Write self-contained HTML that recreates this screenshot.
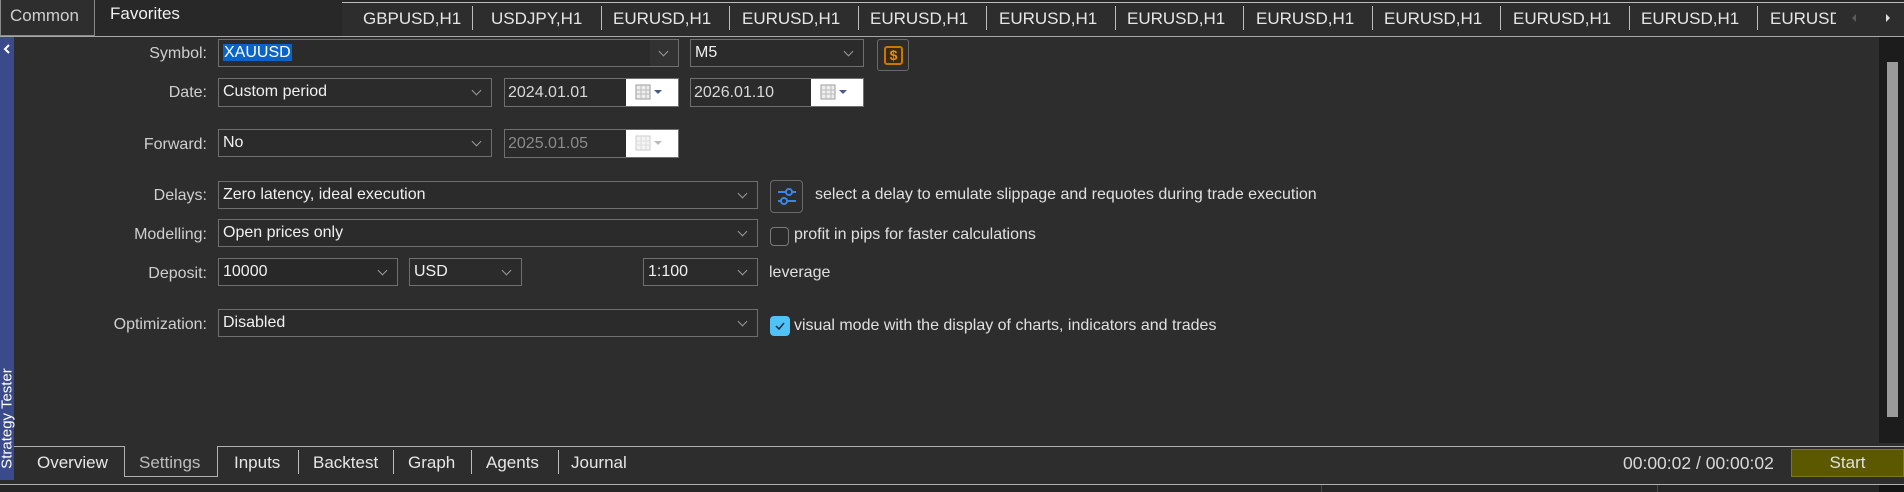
<!DOCTYPE html>
<html><head><meta charset="utf-8"><style>
*{box-sizing:border-box;margin:0;padding:0}
body{width:1904px;height:492px;background:#2d2d2d;font-family:"Liberation Sans",Arial,sans-serif;font-size:16px;color:#e2e2e2;position:relative;overflow:hidden}
.a{position:absolute}
.lbl{position:absolute;width:200px;text-align:right;color:#cfcfcf;left:7px;font-size:16px}
.sel{position:absolute;border:1px solid #6f6f6f;background:#2b2b2b;height:28px;padding:4px 4px;color:#f0f0f0;white-space:nowrap;overflow:hidden}
.sel .ar{position:absolute;right:0;top:0;bottom:0;width:28px;}
.sel .ar:after{content:"";position:absolute;left:10px;top:8px;width:6px;height:6px;border-right:1px solid #9a9a9a;border-bottom:1px solid #9a9a9a;transform:rotate(45deg)}
.date{position:absolute;border:1px solid #6f6f6f;background:#2b2b2b;height:29px;padding:5px 3px;color:#d8d8d8}
.cal{position:absolute;right:0;top:0;bottom:0;background:#fff}
.tab{position:absolute;top:8px;color:#e6e6e6;font-size:17px}
.sep{position:absolute;width:1px;background:#bdbdbd}
.bt{position:absolute;top:453px;font-size:17px;color:#e6e6e6}
.txt{position:absolute;color:#e0e0e0}
</style></head><body>
<div class="a" style="left:0;top:0;width:1904px;height:37px;background:#282828"></div>
<div class="a" style="left:0;top:0;width:95px;height:36px;border:1px solid #8a8a8a;border-top:none;background:#2e2e2e"></div>
<div class="a" style="left:10px;top:6px;color:#cfcfcf;font-size:17px">Common</div>
<div class="a" style="left:110px;top:4px;color:#f0f0f0;font-size:17px">Favorites</div>
<div class="a" style="left:342px;top:2px;width:1562px;height:1px;background:#bdbdbd"></div>
<div class="a" style="left:342px;top:3px;width:1562px;height:34px;background:#2d2d2d"></div>
<div class="a" style="left:0;top:36px;width:1904px;height:1px;background:#a8a8a8"></div>
<div class="tab" style="left:363px;top:9px">GBPUSD,H1</div>
<div class="tab" style="left:491px;top:9px">USDJPY,H1</div>
<div class="tab" style="left:613px;top:9px">EURUSD,H1</div>
<div class="tab" style="left:742px;top:9px">EURUSD,H1</div>
<div class="tab" style="left:870px;top:9px">EURUSD,H1</div>
<div class="tab" style="left:999px;top:9px">EURUSD,H1</div>
<div class="tab" style="left:1127px;top:9px">EURUSD,H1</div>
<div class="tab" style="left:1256px;top:9px">EURUSD,H1</div>
<div class="tab" style="left:1384px;top:9px">EURUSD,H1</div>
<div class="tab" style="left:1513px;top:9px">EURUSD,H1</div>
<div class="tab" style="left:1641px;top:9px">EURUSD,H1</div>
<div class="tab" style="left:1770px;top:9px;width:66px;overflow:hidden;white-space:nowrap">EURUSD,H1</div>
<div class="sep" style="left:472px;top:6px;height:24px"></div>
<div class="sep" style="left:601px;top:6px;height:24px"></div>
<div class="sep" style="left:729px;top:6px;height:24px"></div>
<div class="sep" style="left:858px;top:6px;height:24px"></div>
<div class="sep" style="left:986px;top:6px;height:24px"></div>
<div class="sep" style="left:1115px;top:6px;height:24px"></div>
<div class="sep" style="left:1243px;top:6px;height:24px"></div>
<div class="sep" style="left:1372px;top:6px;height:24px"></div>
<div class="sep" style="left:1500px;top:6px;height:24px"></div>
<div class="sep" style="left:1629px;top:6px;height:24px"></div>
<div class="sep" style="left:1757px;top:6px;height:24px"></div>
<div class="a" style="left:1836px;top:3px;width:68px;height:33px;background:#2d2d2d"></div>
<svg class="a" style="left:1848px;top:12px" width="50" height="12"><path d="M8 2 L4 6 L8 10Z" fill="#5a5a5a"/><path d="M38 2 L42 6 L38 10Z" fill="#e0e0e0"/></svg>

<div class="a" style="left:0;top:37px;width:14px;height:443px;background:#3b4a8a"></div>
<svg class="a" style="left:2px;top:43px" width="10" height="12"><path d="M7 2 L3 6 L7 10" stroke="#fff" stroke-width="2" fill="none"/></svg>
<div class="a" style="left:-50px;top:410px;width:114px;transform:rotate(-90deg);color:#ffffff;font-size:15px;white-space:nowrap;text-align:center">Strategy Tester</div>

<div class="a" style="left:1879px;top:37px;width:25px;height:406px;background:#1c1c1c"></div>
<div class="a" style="left:1887px;top:62px;width:11px;height:355px;background:#9a9a9a"></div>

<div class="lbl" style="top:45px">Symbol:</div>
<div class="sel" style="left:218px;top:39px;width:461px"><span style="background:#0a64c8;color:#fff;padding:0 1px">XAUUSD</span><div class="ar" style="background:#323232"></div></div>
<div class="sel" style="left:690px;top:39px;width:174px">M5<div class="ar"></div></div>
<div class="a" style="left:877px;top:39px;width:32px;height:32px;border:1px solid #6a6a6a;border-radius:3px"></div>
<div class="a" style="left:884px;top:46px;width:19px;height:19px;border:2px solid #c97800;border-radius:3px;background:#3a2a10;color:#e89000;font-size:14px;font-weight:bold;text-align:center;line-height:15px">$</div>

<div class="lbl" style="top:84px">Date:</div>
<div class="sel" style="left:218px;top:78px;width:274px;height:29px">Custom period<div class="ar"></div></div>
<div class="date" style="left:504px;top:78px;width:175px">2024.01.01<div class="cal" style="width:52px"><svg width="52" height="27"><rect x="10" y="6" width="14" height="14" fill="#eee" stroke="#999"/><path d="M10 11h14M10 15h14M15 6v14M20 6v14" stroke="#bbb"/><path d="M28 11h8l-4 4z" fill="#4a5a90"/></svg></div></div>
<div class="date" style="left:690px;top:78px;width:174px">2026.01.10<div class="cal" style="width:52px"><svg width="52" height="27"><rect x="10" y="6" width="14" height="14" fill="#eee" stroke="#999"/><path d="M10 11h14M10 15h14M15 6v14M20 6v14" stroke="#bbb"/><path d="M28 11h8l-4 4z" fill="#4a5a90"/></svg></div></div>

<div class="lbl" style="top:136px">Forward:</div>
<div class="sel" style="left:218px;top:129px;width:274px">No<div class="ar"></div></div>
<div class="date" style="left:504px;top:129px;width:175px;color:#8a8a8a">2025.01.05<div class="cal" style="width:52px"><svg width="52" height="27"><rect x="10" y="6" width="14" height="14" fill="#f4f4f4" stroke="#ccc"/><path d="M10 11h14M10 15h14M15 6v14M20 6v14" stroke="#ddd"/><path d="M28 11h8l-4 4z" fill="#bbb"/></svg></div></div>

<div class="lbl" style="top:187px">Delays:</div>
<div class="sel" style="left:218px;top:181px;width:540px">Zero latency, ideal execution<div class="ar"></div></div>
<div class="a" style="left:770px;top:180px;width:33px;height:33px;border:1px solid #6a6a6a;border-radius:4px"></div>
<svg class="a" style="left:776px;top:186px" width="22" height="22"><path d="M2 6h18M2 15h18" stroke="#3a86e8" stroke-width="2"/><circle cx="13" cy="6" r="3" fill="#2d2d2d" stroke="#3a86e8" stroke-width="2"/><circle cx="8" cy="15" r="3" fill="#2d2d2d" stroke="#3a86e8" stroke-width="2"/></svg>
<div class="txt" style="left:815px;top:186px">select a delay to emulate slippage and requotes during trade execution</div>

<div class="lbl" style="top:226px">Modelling:</div>
<div class="sel" style="left:218px;top:219px;width:540px">Open prices only<div class="ar"></div></div>
<div class="a" style="left:770px;top:227px;width:19px;height:19px;border:1px solid #7a7a7a;border-radius:4px;background:#2a2a2a"></div>
<div class="txt" style="left:794px;top:226px">profit in pips for faster calculations</div>

<div class="lbl" style="top:265px">Deposit:</div>
<div class="sel" style="left:218px;top:258px;width:180px;background:#282828">10000<div class="ar"></div></div>
<div class="sel" style="left:409px;top:258px;width:113px">USD<div class="ar"></div></div>
<div class="sel" style="left:643px;top:258px;width:115px">1:100<div class="ar"></div></div>
<div class="txt" style="left:769px;top:264px">leverage</div>

<div class="lbl" style="top:316px">Optimization:</div>
<div class="sel" style="left:218px;top:309px;width:540px">Disabled<div class="ar"></div></div>
<div class="a" style="left:770px;top:316px;width:20px;height:20px;border-radius:4px;background:#4fc3f7"></div>
<svg class="a" style="left:770px;top:316px" width="20" height="20"><path d="M6 10l3 3 5-6" stroke="#1a2a3a" stroke-width="1.5" fill="none"/></svg>
<div class="txt" style="left:794px;top:317px">visual mode with the display of charts, indicators and trades</div>

<div class="a" style="left:14px;top:446px;width:1890px;height:1px;background:#b0b0b0"></div>
<div class="a" style="left:124px;top:446px;width:94px;height:31px;border:1px solid #b0b0b0;border-top:none;background:#2d2d2d"></div>
<div class="bt" style="left:37px">Overview</div>
<div class="bt" style="left:139px;color:#bdbdbd">Settings</div>
<div class="bt" style="left:234px">Inputs</div>
<div class="bt" style="left:313px">Backtest</div>
<div class="bt" style="left:408px">Graph</div>
<div class="bt" style="left:486px">Agents</div>
<div class="bt" style="left:571px">Journal</div>
<div class="sep" style="left:298px;top:450px;height:24px"></div>
<div class="sep" style="left:393px;top:450px;height:24px"></div>
<div class="sep" style="left:471px;top:450px;height:24px"></div>
<div class="sep" style="left:558px;top:450px;height:24px"></div>
<div class="a" style="left:1623px;top:453px;color:#d8d8d8;font-size:17.5px">00:00:02 / 00:00:02</div>
<div class="a" style="left:1791px;top:449px;width:113px;height:28px;background:#5c5800;border:1px solid #7c7a10;color:#e0e0e0;text-align:center;line-height:26px;font-size:17px">Start</div>
<div class="a" style="left:0;top:484px;width:1904px;height:1px;background:#b0b0b0"></div>
<div class="a" style="left:0;top:485px;width:1904px;height:7px;background:#262626"></div>
<div class="a" style="left:1321px;top:485px;width:1px;height:7px;background:#4a4a4a"></div>
<div class="a" style="left:1657px;top:485px;width:1px;height:7px;background:#4a4a4a"></div>
<div class="a" style="left:1879px;top:485px;width:25px;height:7px;background:#151515"></div>
</body></html>
